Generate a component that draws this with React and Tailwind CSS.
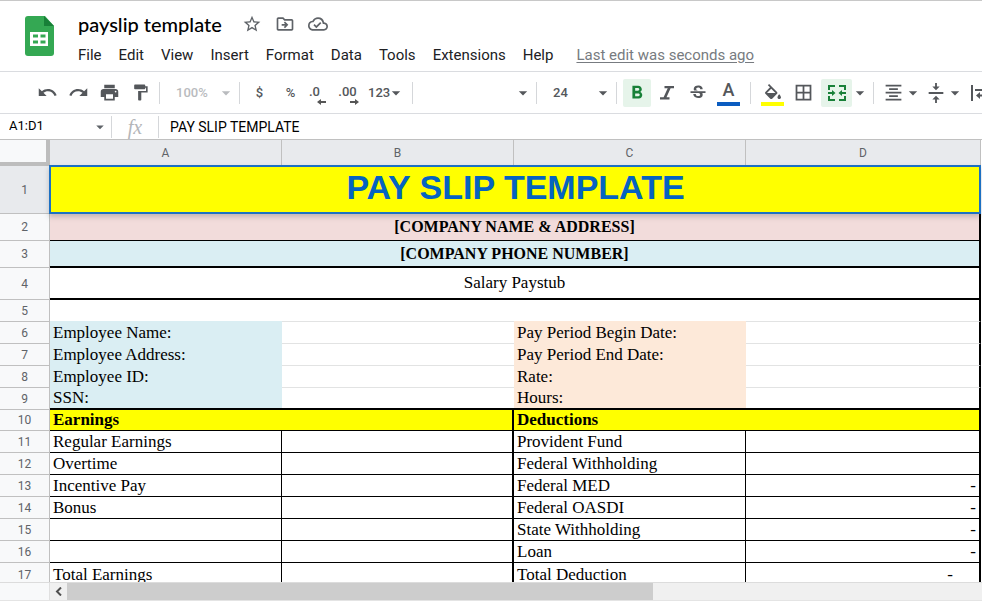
import React from "react";
import {
  MdUndo, MdRedo, MdPrint, MdFormatPaint, MdArrowDropDown, MdFormatBold,
  MdStrikethroughS, MdBorderAll, MdFormatAlignCenter,
  MdVerticalAlignCenter, MdStarBorder, MdOutlineDriveFileMove, MdOutlineCloudDone,
} from "react-icons/md";

const menus = ["File", "Edit", "View", "Insert", "Format", "Data", "Tools", "Extensions", "Help"];

const infoRows = [
  [6, "Employee Name:", "Pay Period Begin Date:"],
  [7, "Employee Address:", "Pay Period End Date:"],
  [8, "Employee ID:", "Rate:"],
  [9, "SSN:", "Hours:"],
];

const payRows = [
  [11, "Regular Earnings", "Provident Fund", ""],
  [12, "Overtime", "Federal Withholding", ""],
  [13, "Incentive Pay", "Federal MED", "-"],
  [14, "Bonus", "Federal OASDI", "-"],
  [15, "", "State Withholding", "-"],
  [16, "", "Loan", "-"],
  [17, "Total Earnings", "Total Deduction", "-"],
];

function SheetsLogo() {
  return (
    <svg viewBox="0 0 29 40" className="h-10 w-[29px]" aria-hidden="true">
      <path d="M3 0h17l9 10v27a3 3 0 0 1-3 3H3a3 3 0 0 1-3-3V3a3 3 0 0 1 3-3z" fill="#34a853" />
      <path d="M19 0l10 10H19z" fill="#188038" />
      <path fillRule="evenodd" fill="#fff" d="M5 16h18v14H5zM8 18.500v3h5v-3zM15.500 18.500v3h5v-3zM8 24.500v3h5v-3zM15.500 24.500v3h5v-3z" />
    </svg>
  );
}

function MergeIcon() {
  return (
    <svg viewBox="0 0 18 16" className="h-4 w-[18px]" fill="none" stroke="#188038" strokeWidth="2" aria-hidden="true">
      <path d="M1 5V1h6M11 1h6v4M1 11v4h6M11 15h6v-4" />
      <path d="M0 8h5M18 8h-5" />
      <path d="M4 5l3.500 3L4 11zM14 5l-3.500 3 3.500 3z" fill="#188038" stroke="none" />
    </svg>
  );
}

function ItalicIcon() {
  return (
    <svg viewBox="0 0 14 14" className="size-3.5" fill="currentColor" aria-hidden="true">
      <path d="M4.500 0H14v2.200h-3.400L6.500 11.300h3V13.500H0v-2.200h3.600L7.700 2.200H4.500z" />
    </svg>
  );
}

function BucketIcon() {
  return (
    <svg viewBox="2 0 20 18" className="h-4 w-[18px]" fill="currentColor" aria-hidden="true">
      <path d="M16.56 8.94L7.62 0 6.21 1.41l2.38 2.38-5.15 5.15a1.49 1.49 0 0 0 0 2.12l5.5 5.5c.29.29.68.44 1.06.44s.77-.15 1.06-.44l5.5-5.5c.59-.58.59-1.53 0-2.12zM5.21 10L10 5.21 14.79 10H5.21zM19 11.500s-2 2.170-2 3.500c0 1.100.9 2 2 2s2-.9 2-2c0-1.330-2-3.500-2-3.500z" />
    </svg>
  );
}

function WrapIcon() {
  return (
    <svg viewBox="0 0 18 16" className="h-4 w-[18px]" fill="none" stroke="currentColor" strokeWidth="2" aria-hidden="true">
      <path d="M1 0v16M17 0v16M4 5h6.500a2.750 2.750 0 0 1 0 5.500H8" />
      <path d="M9 7v7l-4-3.500z" fill="currentColor" stroke="none" />
    </svg>
  );
}

function SmallArrow({ right }) {
  return (
    <svg viewBox="0 0 9 6" className="h-1.5 w-[9px]" fill="#555" aria-hidden="true">
      <path d={right ? "M0 2h5V0l4 3-4 3V4H0z" : "M9 2H4V0L0 3l4 3V4h5z"} />
    </svg>
  );
}

function Tool({ label, width = "w-[31px]", className = "", children }) {
  return (
    <button aria-label={label} className={"flex h-7 shrink-0 items-center justify-center " + width + " " + className}>
      {children}
    </button>
  );
}

function Caret({ label }) {
  return (
    <button aria-label={label} className="flex h-7 w-[19px] shrink-0 items-center justify-center">
      <MdArrowDropDown size={20} className="shrink-0" />
    </button>
  );
}

function Sep({ className = "" }) {
  return <div className={"h-[22px] w-px shrink-0 bg-[#d5d7da] " + className} />;
}

function Picker({ label, value, className = "" }) {
  return (
    <label className={"flex h-7 shrink-0 items-center pr-[3px] pl-4 " + className}>
      <select aria-label={label} defaultValue={value} className="min-w-0 flex-1 appearance-none bg-transparent text-[13px]">
        <option>{value}</option>
      </select>
      <MdArrowDropDown size={20} className="pointer-events-none shrink-0" />
    </label>
  );
}

function RowHead({ n, fill = "bg-[#f8f9fa]" }) {
  return (
    <th scope="row" className={"border-r border-b border-[#c0c0c0] font-['Roboto',sans-serif] text-xs font-normal text-[#5f6368] " + fill}>
      {n}
    </th>
  );
}

export default function App() {
  return (
    <div className="flex h-screen flex-col overflow-hidden bg-white font-['Roboto',sans-serif] text-[#202124]">
      <header className="flex h-[72px] shrink-0 items-start border-t border-b border-t-[#c8c8c8] border-b-[#dadce0] pt-[15px] pl-[25px]">
        <SheetsLogo />
        <div className="-mt-1 ml-6">
          <div className="flex h-6 items-center">
            <h1 className="mr-5 font-['Lato',sans-serif] text-xl font-medium text-black">payslip template</h1>
            <div className="flex items-center gap-[13px] text-[#5f6368]">
              <button aria-label="Star"><MdStarBorder size={20} /></button>
              <button aria-label="Move"><MdOutlineDriveFileMove size={20} /></button>
              <button aria-label="Saved to Drive"><MdOutlineCloudDone size={20} /></button>
            </div>
          </div>
          <nav className="mt-[7px] flex h-6 items-center gap-[17px] text-[15px] whitespace-nowrap">
            {menus.map((m) => (
              <button key={m}>{m}</button>
            ))}
            <a href="#history" className="ml-1.5 text-[#777b80] underline underline-offset-2">Last edit was seconds ago</a>
          </nav>
        </div>
      </header>

      <div role="toolbar" className="flex h-[42px] shrink-0 items-center overflow-hidden border-b border-[#dadce0] pl-8 text-[13px] font-medium text-[#54575b]">
        <Tool label="Undo"><MdUndo size={21} /></Tool>
        <Tool label="Redo"><MdRedo size={21} /></Tool>
        <Tool label="Print"><MdPrint size={21} /></Tool>
        <Tool label="Paint format"><MdFormatPaint size={19} /></Tool>
        <Sep className="ml-[3px]" />
        <Picker label="Zoom" value="100%" className="w-[79px] text-[#b9bbbe]" />
        <Sep />
        <Tool label="Currency" className="ml-1">$</Tool>
        <Tool label="Percent">%</Tool>
        <Tool label="Decrease decimals" className="-ml-1">
          <span className="flex flex-col items-end pt-1 leading-[14px]"><span className="pr-1.5">.0</span><SmallArrow /></span>
        </Tool>
        <Tool label="Increase decimals">
          <span className="flex flex-col items-end pt-1 leading-[14px]"><span className="pr-0.5">.00</span><SmallArrow right /></span>
        </Tool>
        <button className="ml-1 flex h-7 w-10 shrink-0 items-center">123<MdArrowDropDown size={20} className="-ml-1 shrink-0" /></button>
        <Sep className="ml-1" />
        <Picker label="Font" value="" className="w-[123px]" />
        <Sep />
        <Picker label="Font size" value="24" className="w-[79px]" />
        <Sep />
        <Tool label="Bold" width="w-7" className="ml-1.5 rounded-xs bg-[#e6f4ea] text-[#188038]"><MdFormatBold size={22} /></Tool>
        <Tool label="Italic"><ItalicIcon /></Tool>
        <Tool label="Strikethrough"><MdStrikethroughS size={20} /></Tool>
        <Tool label="Text color">
          <span className="flex flex-col items-center"><span className="h-[22px] text-lg leading-5 font-medium">A</span><span className="h-1 w-[23px] bg-[#0b5cc0]" /></span>
        </Tool>
        <Sep className="ml-1.5" />
        <Tool label="Fill color" className="ml-1.5">
          <span className="flex flex-col items-center"><span className="flex h-[22px] items-start pt-1"><BucketIcon /></span><span className="h-1 w-[23px] bg-[#ffff00]" /></span>
        </Tool>
        <Tool label="Borders"><MdBorderAll size={21} /></Tool>
        <Tool label="Merge cells" className="ml-0.5 rounded-xs bg-[#e6f4ea]"><MergeIcon /></Tool>
        <div className="-ml-0.5"><Caret label="Merge options" /></div>
        <Sep className="ml-1" />
        <Tool label="Horizontal align" className="ml-1"><MdFormatAlignCenter size={21} /></Tool>
        <div className="-ml-1.5"><Caret label="Horizontal align options" /></div>
        <Tool label="Vertical align" className="-ml-0.5"><MdVerticalAlignCenter size={22} /></Tool>
        <div className="-ml-1.5"><Caret label="Vertical align options" /></div>
        <Tool label="Text wrapping"><WrapIcon /></Tool>
      </div>

      <div className="flex h-[26px] shrink-0 items-center border-b border-[#c0c0c0] pl-[9px] text-sm text-black">
        <label className="flex w-[102px] items-center">
          <input aria-label="Name box" defaultValue="A1:D1" className="w-[82px] bg-transparent text-[13px]" />
          <MdArrowDropDown size={18} className="shrink-0 text-[#5f6368]" />
        </label>
        <Sep />
        <span className="w-[46px] text-center font-['Liberation_Serif',serif] text-xl leading-6 text-[#b4b6b9] italic">fx</span>
        <Sep className="h-[18px]" />
        <input aria-label="Formula" defaultValue="PAY SLIP TEMPLATE" className="ml-[11px] min-w-0 flex-1 bg-transparent text-sm" />
      </div>

      <main className="min-h-0 flex-1 overflow-hidden pr-px">
        <table className="w-full table-fixed border-separate border-spacing-0 font-['Liberation_Serif',serif] text-[17px] leading-5 text-black [&_td]:p-0">
          <colgroup>
            <col className="w-[50px]" />
            <col className="w-[232px]" />
            <col className="w-[232px]" />
            <col className="w-[232px]" />
            <col />
          </colgroup>
          <thead>
            <tr className="h-[26px] font-['Roboto',sans-serif] text-xs text-[#5f6368]">
              <td className="border-r-4 border-b-4 border-[#bdbdbd] bg-[#f8f9fa]" />
              {["A", "B", "C", "D"].map((c) => (
                <th key={c} scope="col" className="border-r border-b border-[#c0c0c0] bg-[#e8eaed] p-0 font-normal">{c}</th>
              ))}
            </tr>
          </thead>
          <tbody>
            <tr className="h-12">
              <RowHead n={1} fill="bg-[#e8eaed]" />
              <td colSpan={4} className="relative bg-[#ffff00] text-center font-['Liberation_Sans',sans-serif] text-[34px] leading-10 font-bold text-[#0563c1]">
                <div className="pb-[7px]">PAY SLIP TEMPLATE</div>
                <div className="absolute -top-px right-0 bottom-0 -left-px border-2 border-[#1d70c2] shadow-[0_3px_5px_rgba(60,64,67,0.25)]" />
              </td>
            </tr>
            <tr className="h-[27px] text-base">
              <RowHead n={2} />
              <td colSpan={4} className="border-r-2 border-b border-black bg-[#f2dcdb] text-center font-bold">[COMPANY NAME &amp; ADDRESS]</td>
            </tr>
            <tr className="h-[27px] text-base">
              <RowHead n={3} />
              <td colSpan={4} className="border-r-2 border-b-2 border-black bg-[#daeef3] text-center font-bold">[COMPANY PHONE NUMBER]</td>
            </tr>
            <tr className="h-8">
              <RowHead n={4} />
              <td colSpan={4} className="border-r-2 border-b-2 border-black text-center">Salary Paystub</td>
            </tr>
            <tr className="h-[22px]">
              <RowHead n={5} />
              <td className="border-b border-[#daeef3]" />
              <td className="border-b border-[#e2e3e3]" />
              <td className="border-b border-[#fde9d9]" />
              <td className="border-r-2 border-b border-r-black border-b-[#e2e3e3]" />
            </tr>
            {infoRows.map(([n, left, right]) => {
              const last = n === 9;
              const plain = last ? "border-b-2 border-b-black" : "border-b border-b-[#e2e3e3]";
              return (
                <tr key={n} className="h-[22px]">
                  <RowHead n={n} />
                  <td className={"bg-[#daeef3] " + (last ? "border-b-2 border-black" : "")}><div className="pl-[3px]">{left}</div></td>
                  <td className={plain} />
                  <td className={"bg-[#fde9d9] " + (last ? "border-b-2 border-black" : "")}><div className="pl-[3px]">{right}</div></td>
                  <td className={"border-r-2 border-r-black " + plain} />
                </tr>
              );
            })}
            <tr className="h-[21px] font-bold">
              <RowHead n={10} />
              <td colSpan={2} className="border-r-2 border-b border-black bg-[#ffff00]"><div className="pl-[3px]">Earnings</div></td>
              <td colSpan={2} className="border-r-2 border-b border-black bg-[#ffff00]"><div className="pl-[3px]">Deductions</div></td>
            </tr>
            {payRows.map(([n, left, right, amount]) => (
              <tr key={n} className={n === 17 ? "h-6" : "h-[22px]"}>
                <RowHead n={n} />
                <td className="border-r border-b border-black"><div className="pl-[3px]">{left}</div></td>
                <td className="border-r-2 border-b border-black" />
                <td className="border-r border-b border-black"><div className="pl-[3px]">{right}</div></td>
                <td className="border-r-2 border-b border-black text-right"><div className={n === 17 ? "pr-[26px]" : "pr-[3px]"}>{amount}</div></td>
              </tr>
            ))}
          </tbody>
        </table>
      </main>

      <footer className="flex h-[19px] shrink-0 border-t border-b border-t-[#dcdcdc] border-b-[#e4e4e4] bg-[#f0f0f0]">
        <div className="w-[50px] border-r border-[#e0e0e0] bg-[#f8f9fa]" />
        <button aria-label="Scroll left" className="flex w-[17px] items-center justify-center">
          <svg viewBox="0 0 7 9" className="h-[9px] w-[7px]" fill="none" stroke="#505050" strokeWidth="2" aria-hidden="true">
            <path d="M6 .5L2 4.500l4 4" />
          </svg>
        </button>
        <div className="flex-1"><div className="h-full w-[64%] bg-[#cdcdcd]" /></div>
      </footer>
    </div>
  );
}
